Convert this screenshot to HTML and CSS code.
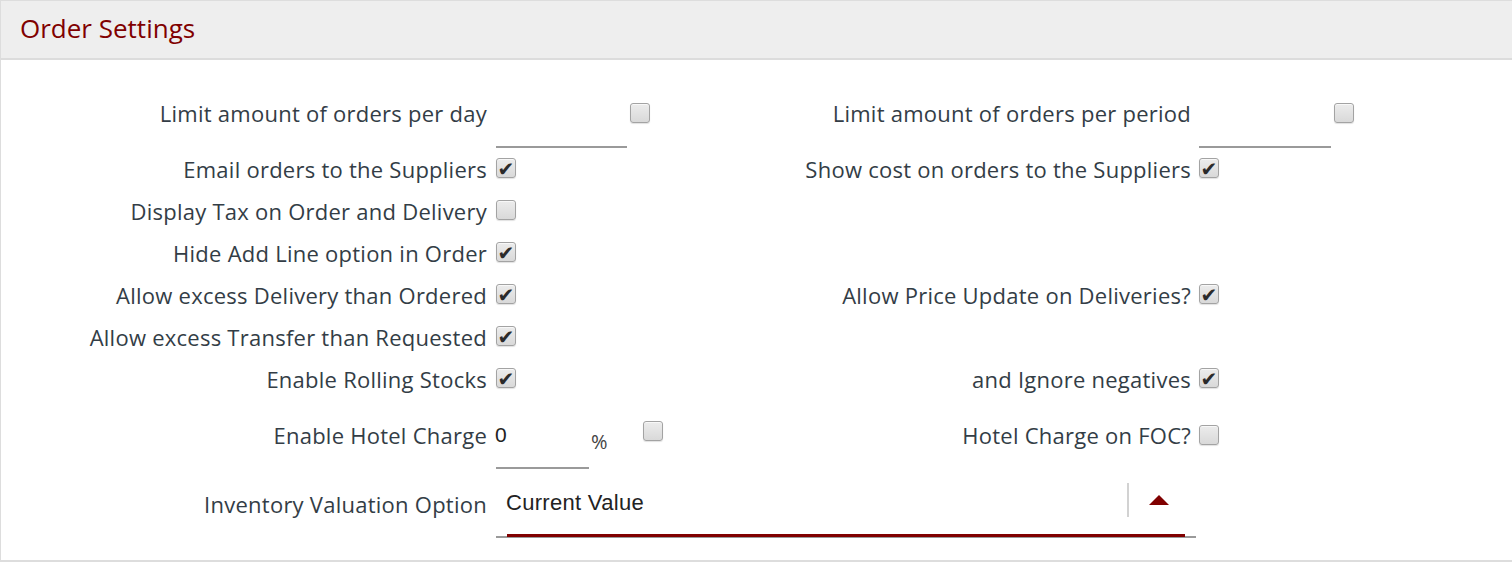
FILE: index.html
```html
<!DOCTYPE html>
<html lang="en">
<head>
<meta charset="utf-8">
<title>Order Settings</title>
<link rel="stylesheet" href="styles.css">
</head>
<body>
<div class="panel">
  <div class="panel-heading">
    <h3 class="panel-title">Order Settings</h3>
  </div>
  <div class="panel-body">
    <div class="row row-input">
      <label class="lbl lbl-top">Limit amount of orders per day</label>
      <div class="ctl">
        <span class="line-input in-day"></span>
        <span class="cb cb-input"></span>
      </div>
      <label class="lbl lbl-top">Limit amount of orders per period</label>
      <div class="ctl ctl-right">
        <span class="line-input in-period"></span>
        <span class="cb cb-input"></span>
      </div>
    </div>

    <div class="row">
      <label class="lbl">Email orders to the Suppliers</label>
      <div class="ctl"><span class="cb checked"></span></div>
      <label class="lbl">Show cost on orders to the Suppliers</label>
      <div class="ctl ctl-right"><span class="cb checked"></span></div>
    </div>

    <div class="row">
      <label class="lbl">Display Tax on Order and Delivery</label>
      <div class="ctl"><span class="cb"></span></div>
      <div class="lbl"></div>
      <div class="ctl ctl-right"></div>
    </div>

    <div class="row">
      <label class="lbl">Hide Add Line option in Order</label>
      <div class="ctl"><span class="cb checked"></span></div>
      <div class="lbl"></div>
      <div class="ctl ctl-right"></div>
    </div>

    <div class="row">
      <label class="lbl">Allow excess Delivery than Ordered</label>
      <div class="ctl"><span class="cb checked"></span></div>
      <label class="lbl">Allow Price Update on Deliveries?</label>
      <div class="ctl ctl-right"><span class="cb checked"></span></div>
    </div>

    <div class="row">
      <label class="lbl">Allow excess Transfer than Requested</label>
      <div class="ctl"><span class="cb checked"></span></div>
      <div class="lbl"></div>
      <div class="ctl ctl-right"></div>
    </div>

    <div class="row">
      <label class="lbl">Enable Rolling Stocks</label>
      <div class="ctl"><span class="cb checked"></span></div>
      <label class="lbl">and Ignore negatives</label>
      <div class="ctl ctl-right"><span class="cb checked"></span></div>
    </div>

    <div class="row row-hotel">
      <label class="lbl lbl-hotel">Enable Hotel Charge</label>
      <div class="ctl">
        <span class="line-input in-hotel">0</span>
        <span class="pct">%</span>
        <span class="cb cb-hotel"></span>
      </div>
      <label class="lbl lbl-hotel">Hotel Charge on FOC?</label>
      <div class="ctl ctl-right"><span class="cb cb-foc"></span></div>
    </div>

    <div class="row row-select">
      <label class="lbl lbl-select">Inventory Valuation Option</label>
      <div class="ctl ctl-wide">
        <div class="select">
          <span class="select-value">Current Value</span>
          <span class="select-divider"></span>
          <span class="select-arrow"></span>
          <span class="select-focus"></span>
        </div>
      </div>
    </div>
  </div>
</div>
</body>
</html>
```

FILE: styles.css
```css
html, body {
  margin: 0;
  padding: 0;
  background: #ffffff;
}

body {
  overflow: hidden;
  font-family: "Open Sans", "Liberation Sans", Arial, sans-serif;
  color: #333d46;
}

.panel {
  border-top: 1px solid #dddddd;
  border-left: 1px solid #dddddd;
  border-bottom: 2px solid #dddddd;
  background: #ffffff;
}

.panel-heading {
  box-sizing: border-box;
  height: 59px;
  background: #eeeeee;
  border-bottom: 2px solid #dcdcdc;
  display: flex;
  align-items: center;
  padding-left: 19px;
  padding-bottom: 3px;
}

.panel-title {
  margin: 0;
  font-family: "Open Sans", sans-serif;
  font-weight: 400;
  font-size: 26px;
  color: #800000;
  line-height: 1;
}

.panel-body {
  padding-top: 33px;
  padding-bottom: 22px;
}

.row {
  display: grid;
  grid-template-columns: 486px 217px 487px 1fr;
  height: 42px;
  align-items: start;
}

.row-input { height: 56px; }
.row-hotel { height: 74px; }
.row-select { height: 63px; }

.lbl {
  display: block;
  margin-top: -1px;
  text-align: right;
  font-size: 22px;
  letter-spacing: 0.25px;
  line-height: 42px;
  white-space: nowrap;
  color: #333d46;
}

.lbl-hotel { margin-top: 13px; }
.lbl-select { margin-top: 8px; }

.ctl {
  display: flex;
  align-items: flex-start;
  padding-left: 9px;
}

.ctl-right {
  padding-left: 8px;
}

.ctl-wide {
  grid-column: 2 / 5;
}

/* checkboxes */
.cb {
  box-sizing: border-box;
  width: 20px;
  height: 20px;
  margin-top: 9px;
  border: 1px solid #a3a3a3;
  border-radius: 3px;
  background: linear-gradient(#ececec, #d9d9d9);
  box-shadow: inset 0 1px 0 #f8f8f8, 0 1px 1px rgba(0,0,0,0.12);
  display: flex;
  align-items: center;
  justify-content: center;
  flex: none;
  overflow: hidden;
}

.cb.checked::after {
  content: "\2714";
  font-family: "DejaVu Sans", sans-serif;
  font-size: 20px;
  line-height: 1;
  color: #2b2b2b;
  margin-top: 1px;
}

.cb-input {
  margin-top: 10px;
  margin-left: 3px;
}

.cb-hotel {
  margin-top: 20px;
  margin-left: 35px;
}

.cb-foc {
  margin-top: 24px;
}

/* underline inputs */
.line-input {
  box-sizing: border-box;
  display: block;
  border-bottom: 2px solid #9a9a9a;
  flex: none;
}

.in-day {
  width: 131px;
  height: 42px;
  margin-top: 13px;
}

.in-period {
  width: 132px;
  height: 42px;
  margin-top: 13px;
}

.in-hotel {
  width: 93px;
  height: 54px;
  margin-top: 14px;
  text-indent: -1px;
  font-family: "Liberation Sans", Arial, sans-serif;
  font-size: 21px;
  line-height: 40px;
  color: #222222;
}

.pct {
  margin-top: 20px;
  margin-left: 2px;
  font-size: 20px;
  line-height: 42px;
  color: #444444;
}

/* select */
.select {
  position: relative;
  box-sizing: border-box;
  width: 700px;
  height: 63px;
  border-bottom: 2px solid #9a9a9a;
  display: flex;
  align-items: flex-start;
}

.select-value {
  flex: 1;
  margin-top: 8px;
  padding-left: 10px;
  font-family: "Liberation Sans", Arial, sans-serif;
  font-size: 22px;
  letter-spacing: 0.3px;
  line-height: 40px;
  color: #222222;
}

.select-divider {
  width: 2px;
  height: 34px;
  margin-top: 8px;
  background: #d2d2d2;
}

.select-arrow {
  width: 0;
  height: 0;
  margin-top: 20px;
  margin-left: 20px;
  margin-right: 27px;
  border-left: 10px solid transparent;
  border-right: 10px solid transparent;
  border-bottom: 10px solid #800000;
}

.select-focus {
  position: absolute;
  left: 11px;
  right: 11px;
  bottom: -1px;
  height: 3px;
  background: #800000;
}
```
